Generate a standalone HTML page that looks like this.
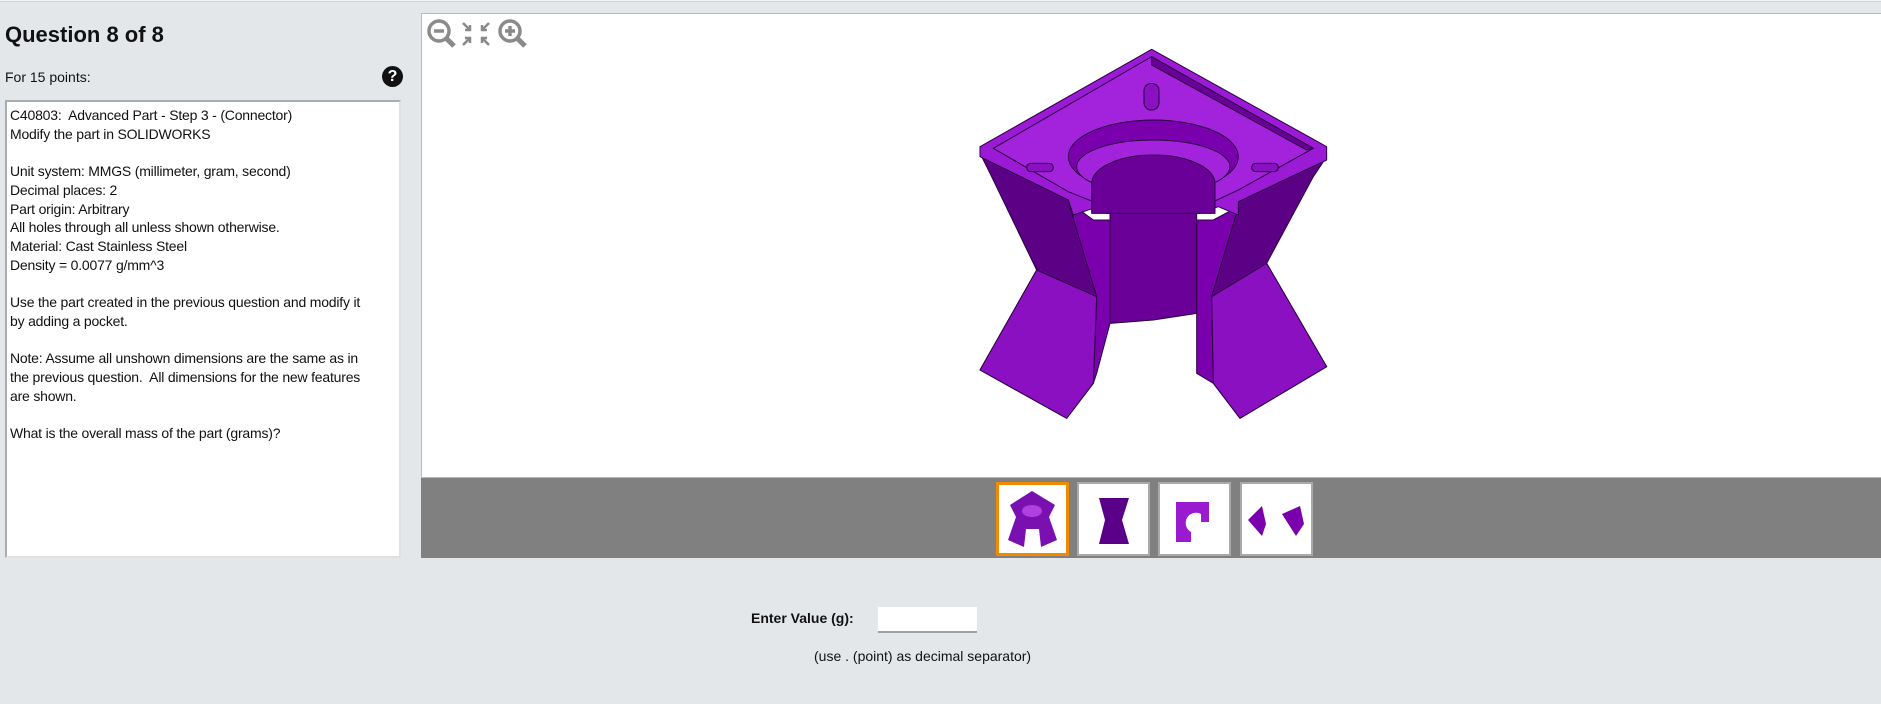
<!DOCTYPE html>
<html><head><meta charset="utf-8"><style>
*{margin:0;padding:0;box-sizing:border-box}
body{width:1881px;height:704px;background:#e4e7ea;font-family:"Liberation Sans",sans-serif;color:#111;position:relative;overflow:hidden}
.top{position:absolute;left:0;top:0;width:1881px;height:2px;background:#f4f5f6;border-bottom:1px solid #cfd3d7}
h1{position:absolute;left:5px;top:22px;font-size:22px;font-weight:bold;color:#111}
.pts{position:absolute;left:5px;top:69px;font-size:14px}
.help{position:absolute;left:382px;top:66px;width:21px;height:21px;border-radius:50%;background:#111;color:#fff;font-weight:bold;font-size:16px;text-align:center;line-height:21px}
.box{position:absolute;left:5px;top:100px;width:396px;height:458px;background:#fff;border:2px solid #a9adb1;border-right-color:#e0e0e0;border-bottom-color:#e0e0e0;padding:4px 3px;font-size:14px;letter-spacing:-0.2px;line-height:18.7px;white-space:pre;overflow:hidden}
.viewer{position:absolute;left:421px;top:13px;width:1460px;height:465px;background:#fff;border:1px solid #b8bcc0;border-right:none}
.bar{position:absolute;left:421px;top:478px;width:1460px;height:80px;background:#808080}
.th{position:absolute;top:482px;width:73px;height:74px;background:#fff;border:2px solid #aaa}
.th.sel{border:3px solid #f28a00}
.lbl{position:absolute;left:751px;top:610px;font-size:14px;font-weight:bold}
.inp{position:absolute;left:878px;top:607px;width:99px;height:26px;background:#fff;border-bottom:2px solid #a0a0a0}
.hint{position:absolute;left:814px;top:648px;font-size:14px}
</style></head><body>
<div class="top"></div>
<h1>Question 8 of 8</h1>
<div class="pts">For 15 points:</div>
<div class="help">?</div>
<div class="box">C40803:  Advanced Part - Step 3 - (Connector)
Modify the part in SOLIDWORKS

Unit system: MMGS (millimeter, gram, second)
Decimal places: 2
Part origin: Arbitrary
All holes through all unless shown otherwise.
Material: Cast Stainless Steel
Density = 0.0077 g/mm^3

Use the part created in the previous question and modify it
by adding a pocket.

Note: Assume all unshown dimensions are the same as in
the previous question.  All dimensions for the new features
are shown.

What is the overall mass of the part (grams)?</div>
<div class="viewer"></div>
<svg style="position:absolute;left:426px;top:18px" width="104" height="32" viewBox="0 0 104 32">
<g fill="none" stroke="#8a8a8a" stroke-width="3.5">
<circle cx="13" cy="13" r="10"/><line x1="20" y1="20" x2="28" y2="28" stroke-width="5"/><line x1="8" y1="13" x2="18" y2="13"/>
<circle cx="84" cy="13" r="10"/><line x1="91" y1="20" x2="99" y2="28" stroke-width="5"/><line x1="79" y1="13" x2="89" y2="13"/><line x1="84" y1="8" x2="84" y2="18"/>
<g stroke-width="2.5"><path d="M37 5l7 7M44 7v5h-5"/><path d="M63 5l-7 7M56 7v5h5"/><path d="M37 27l7-7M44 25v-5h-5"/><path d="M63 27l-7-7M56 25v-5h5"/></g>
</g></svg>
<svg style="position:absolute;left:940px;top:20px" width="420" height="420" viewBox="0 0 1260 1260">
<g stroke="#2a0040" stroke-width="3" stroke-linejoin="round">
<polygon fill="#5c0085" points="120,400 395,545 470,830 460,1090 380,1195 120,1050 290,750 150,460"/>
<polygon fill="#7a00ad" points="385,545 460,600 510,600 510,910 470,1060 460,1090 470,830"/>
<polygon fill="#5c0085" points="1160,410 885,545 815,830 820,1090 900,1195 1160,1040 980,730 1120,470"/>
<polygon fill="#7a00ad" points="895,560 820,600 770,600 770,1060 820,1090 815,830"/>
<polygon fill="#8b10c2" points="120,1050 290,750 470,830 460,1090 380,1195"/>
<polygon fill="#8b10c2" points="1160,1040 980,730 815,830 820,1090 900,1195"/>
<polygon fill="#6a0098" points="510,580 770,580 770,880 640,900 510,910"/>
<polygon fill="#9b1ad6" points="635,88 1160,380 1160,420 895,545 895,585 835,560 780,580 500,580 460,565 400,585 385,540 120,410 120,380"/>
<polygon fill="#a322dc" points="635,110 1120,385 895,510 820,545 780,575 500,575 460,545 385,515 160,385"/>
<polygon fill="#6a0098" points="635,110 1120,385 1100,390 635,135"/>
<ellipse fill="#7a00ad" cx="640" cy="410" rx="255" ry="110"/>
<ellipse fill="#a322dc" cx="640" cy="440" rx="230" ry="80"/>
<path fill="#6a0098" d="M455,580 L455,490 A185,85 0 0 1 825,490 L825,580 Z"/>
<rect fill="#8b10c2" x="612" y="190" width="45" height="80" rx="22"/>
<rect fill="#8b10c2" x="260" y="430" width="80" height="25" rx="12"/>
<rect fill="#8b10c2" x="935" y="430" width="80" height="25" rx="12"/>
</g></svg>
<div class="bar"></div>
<div class="th sel" style="left:996px"><svg width="67" height="68" viewBox="0 0 67 68"><polygon fill="#7a10b0" points="33,6 56,20 50,32 58,55 42,62 40,44 27,44 25,62 9,55 17,32 11,20"/><ellipse cx="33" cy="26" rx="10" ry="6" fill="#b040e0"/></svg></div>
<div class="th" style="left:1077px"><svg width="69" height="70" viewBox="0 0 69 70"><polygon fill="#5a0088" points="20,14 50,14 43,36 50,60 20,60 26,36"/></svg></div>
<div class="th" style="left:1158px"><svg width="69" height="70" viewBox="0 0 69 70"><path fill="#9a1ad0" d="M16 18h33v20h-8v-8a10 10 0 0 0-10 18v10h-15z"/></svg></div>
<div class="th" style="left:1240px"><svg width="69" height="70" viewBox="0 0 69 70"><polygon fill="#7a00ad" points="6,36 20,22 24,40 20,52"/><polygon fill="#7a00ad" points="40,30 58,22 62,40 54,52"/></svg></div>
<div class="lbl">Enter Value (g):</div>
<div class="inp"></div>
<div class="hint">(use . (point) as decimal separator)</div>
</body></html>
